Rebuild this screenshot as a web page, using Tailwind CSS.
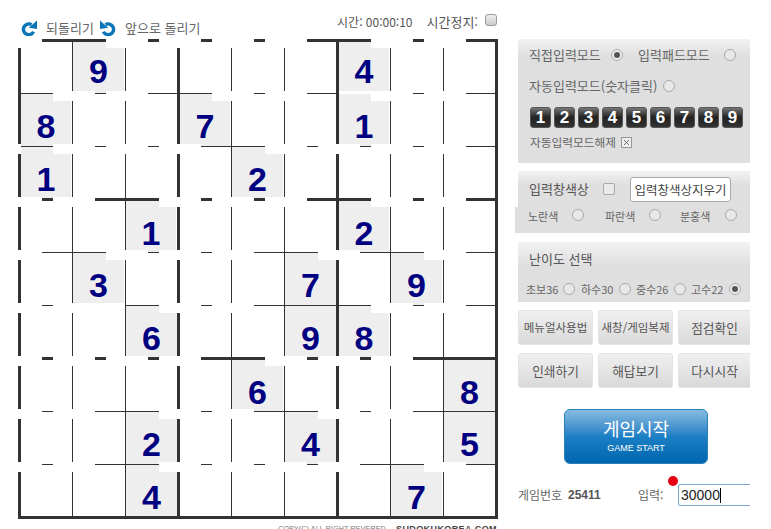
<!DOCTYPE html>
<html lang="ko">
<head>
<meta charset="utf-8">
<script src="https://cdn.jsdelivr.net/npm/@tailwindcss/browser@4"></script>
</head>
<body class="bg-white">
<div class="relative flex w-[771px] h-[529px] overflow-hidden bg-white text-[#666] font-['Noto_Sans_CJK_KR','Liberation_Sans',sans-serif]">

  <!-- left column -->
  <div class="w-[480px] ml-[18px] shrink-0 flex flex-col">
    <div class="h-[39px] shrink-0 relative flex">
      <div class="flex items-center h-[16px] mt-[20px] ml-[3px] text-[13px] leading-[16px]">
        <svg class="w-[16px] h-[16px]" viewBox="0 0 16 16"><path d="M12.6 11.8A5.4 5.4 0 1 1 10.6 4.6" fill="none" stroke="#0a76b7" stroke-width="3.4"/><polygon points="16,0.5 16,9 7.8,7.8" fill="#0a76b7"/></svg>
        <span class="ml-[9px] w-[54px]">되돌리기</span>
        <svg class="w-[16px] h-[16px] -scale-x-100" viewBox="0 0 16 16"><path d="M12.6 11.8A5.4 5.4 0 1 1 10.6 4.6" fill="none" stroke="#0a76b7" stroke-width="3.4"/><polygon points="16,0.5 16,9 7.8,7.8" fill="#0a76b7"/></svg>
        <span class="ml-[9px]">앞으로 돌리기</span>
      </div>
      <div class="ml-auto flex items-start mt-[14px] text-[12px] leading-[16px] text-[#555]">
        <span>시간: 00:00:10</span>
        <span class="ml-[14px] text-[13px]">시간정지:</span>
        <span class="ml-[7px] mr-[1px] w-[12px] h-[12px] rounded-[3px] border border-[#999] bg-linear-to-b from-[#eee] to-[#ccc]"></span>
      </div>
    </div>

    <div class="relative shrink-0 w-[480px] h-[480px] border-[3px] border-[#333] grid grid-cols-[52px_53px_54px_52px_53px_54px_52px_53px_51px] grid-rows-[52px_53px_54px_52px_53px_54px_52px_53px_51px] font-['Liberation_Sans',sans-serif]">
      <!-- row 1 -->
      <div class="border-r border-b border-[#333]"></div>
      <div class="border-r border-b border-[#333]"><div class="h-full mr-px bg-[#eee] flex justify-center pt-[12px] text-[34px] leading-[34px] font-bold text-[#000080]">9</div></div>
      <div class="border-r-[3px] border-b border-[#333]"></div>
      <div class="border-r border-b border-[#333]"></div>
      <div class="border-r border-b border-[#333]"></div>
      <div class="border-r-[3px] border-b border-[#333]"></div>
      <div class="border-r border-b border-[#333]"><div class="h-full mr-px bg-[#eee] flex justify-center pt-[12px] text-[34px] leading-[34px] font-bold text-[#000080]">4</div></div>
      <div class="border-r border-b border-[#333]"></div>
      <div class="border-b border-[#333]"></div>
      <!-- row 2 -->
      <div class="border-r border-b border-[#333]"><div class="h-full mr-px bg-[#eee] flex justify-center pt-[15px] text-[34px] leading-[34px] font-bold text-[#000080]">8</div></div>
      <div class="border-r border-b border-[#333]"></div>
      <div class="border-r-[3px] border-b border-[#333]"></div>
      <div class="border-r border-b border-[#333]"><div class="h-full mr-px bg-[#eee] flex justify-center pt-[15px] text-[34px] leading-[34px] font-bold text-[#000080]">7</div></div>
      <div class="border-r border-b border-[#333]"></div>
      <div class="border-r-[3px] border-b border-[#333]"></div>
      <div class="border-r border-b border-[#333]"><div class="h-full mr-px bg-[#eee] flex justify-center pt-[15px] text-[34px] leading-[34px] font-bold text-[#000080]">1</div></div>
      <div class="border-r border-b border-[#333]"></div>
      <div class="border-b border-[#333]"></div>
      <!-- row 3 -->
      <div class="border-r border-b-[3px] border-[#333]"><div class="h-full mr-px bg-[#eee] flex justify-center pt-[15px] text-[34px] leading-[34px] font-bold text-[#000080]">1</div></div>
      <div class="border-r border-b-[3px] border-[#333]"></div>
      <div class="border-r-[3px] border-b-[3px] border-[#333]"></div>
      <div class="border-r border-b-[3px] border-[#333]"></div>
      <div class="border-r border-b-[3px] border-[#333]"><div class="h-full mr-px bg-[#eee] flex justify-center pt-[15px] text-[34px] leading-[34px] font-bold text-[#000080]">2</div></div>
      <div class="border-r-[3px] border-b-[3px] border-[#333]"></div>
      <div class="border-r border-b-[3px] border-[#333]"></div>
      <div class="border-r border-b-[3px] border-[#333]"></div>
      <div class="border-b-[3px] border-[#333]"></div>
      <!-- row 4 -->
      <div class="border-r border-b border-[#333]"></div>
      <div class="border-r border-b border-[#333]"></div>
      <div class="border-r-[3px] border-b border-[#333]"><div class="h-full mr-px bg-[#eee] flex justify-center pt-[15px] text-[34px] leading-[34px] font-bold text-[#000080]">1</div></div>
      <div class="border-r border-b border-[#333]"></div>
      <div class="border-r border-b border-[#333]"></div>
      <div class="border-r-[3px] border-b border-[#333]"></div>
      <div class="border-r border-b border-[#333]"><div class="h-full mr-px bg-[#eee] flex justify-center pt-[15px] text-[34px] leading-[34px] font-bold text-[#000080]">2</div></div>
      <div class="border-r border-b border-[#333]"></div>
      <div class="border-b border-[#333]"></div>
      <!-- row 5 -->
      <div class="border-r border-b border-[#333]"></div>
      <div class="border-r border-b border-[#333]"><div class="h-full mr-px bg-[#eee] flex justify-center pt-[15px] text-[34px] leading-[34px] font-bold text-[#000080]">3</div></div>
      <div class="border-r-[3px] border-b border-[#333]"></div>
      <div class="border-r border-b border-[#333]"></div>
      <div class="border-r border-b border-[#333]"></div>
      <div class="border-r-[3px] border-b border-[#333]"><div class="h-full bg-[#eee] flex justify-center pt-[15px] text-[34px] leading-[34px] font-bold text-[#000080]">7</div></div>
      <div class="border-r border-b border-[#333]"></div>
      <div class="border-r border-b border-[#333]"><div class="h-full mr-px bg-[#eee] flex justify-center pt-[15px] text-[34px] leading-[34px] font-bold text-[#000080]">9</div></div>
      <div class="border-b border-[#333]"></div>
      <!-- row 6 -->
      <div class="border-r border-b-[3px] border-[#333]"></div>
      <div class="border-r border-b-[3px] border-[#333]"></div>
      <div class="border-r-[3px] border-b-[3px] border-[#333]"><div class="h-full bg-[#eee] flex justify-center pt-[15px] text-[34px] leading-[34px] font-bold text-[#000080]">6</div></div>
      <div class="border-r border-b-[3px] border-[#333]"></div>
      <div class="border-r border-b-[3px] border-[#333]"></div>
      <div class="border-r-[3px] border-b-[3px] border-[#333]"><div class="h-full bg-[#eee] flex justify-center pt-[15px] text-[34px] leading-[34px] font-bold text-[#000080]">9</div></div>
      <div class="border-r border-b-[3px] border-[#333]"><div class="h-full mr-px bg-[#eee] flex justify-center pt-[15px] text-[34px] leading-[34px] font-bold text-[#000080]">8</div></div>
      <div class="border-r border-b-[3px] border-[#333]"></div>
      <div class="border-b-[3px] border-[#333]"></div>
      <!-- row 7 -->
      <div class="border-r border-b border-[#333]"></div>
      <div class="border-r border-b border-[#333]"></div>
      <div class="border-r-[3px] border-b border-[#333]"></div>
      <div class="border-r border-b border-[#333]"></div>
      <div class="border-r border-b border-[#333]"><div class="h-full mr-px bg-[#eee] flex justify-center pt-[15px] text-[34px] leading-[34px] font-bold text-[#000080]">6</div></div>
      <div class="border-r-[3px] border-b border-[#333]"></div>
      <div class="border-r border-b border-[#333]"></div>
      <div class="border-r border-b border-[#333]"></div>
      <div class="border-b border-[#333]"><div class="h-full bg-[#eee] flex justify-center pt-[15px] text-[34px] leading-[34px] font-bold text-[#000080]">8</div></div>
      <!-- row 8 -->
      <div class="border-r border-b border-[#333]"></div>
      <div class="border-r border-b border-[#333]"></div>
      <div class="border-r-[3px] border-b border-[#333]"><div class="h-full bg-[#eee] flex justify-center pt-[15px] text-[34px] leading-[34px] font-bold text-[#000080]">2</div></div>
      <div class="border-r border-b border-[#333]"></div>
      <div class="border-r border-b border-[#333]"></div>
      <div class="border-r-[3px] border-b border-[#333]"><div class="h-full bg-[#eee] flex justify-center pt-[15px] text-[34px] leading-[34px] font-bold text-[#000080]">4</div></div>
      <div class="border-r border-b border-[#333]"></div>
      <div class="border-r border-b border-[#333]"></div>
      <div class="border-b border-[#333]"><div class="h-full bg-[#eee] flex justify-center pt-[15px] text-[34px] leading-[34px] font-bold text-[#000080]">5</div></div>
      <!-- row 9 -->
      <div class="border-r border-[#333]"></div>
      <div class="border-r border-[#333]"></div>
      <div class="border-r-[3px] border-[#333]"><div class="h-full bg-[#eee] flex justify-center pt-[15px] text-[34px] leading-[34px] font-bold text-[#000080]">4</div></div>
      <div class="border-r border-[#333]"></div>
      <div class="border-r border-[#333]"></div>
      <div class="border-r-[3px] border-[#333]"></div>
      <div class="border-r border-[#333]"></div>
      <div class="border-r border-[#333]"><div class="h-full mr-px bg-[#eee] flex justify-center pt-[15px] text-[34px] leading-[34px] font-bold text-[#000080]">7</div></div>
      <div></div>

      <!-- white patches lying over the board lines -->
      <svg class="absolute -left-[3px] -top-[3px] w-[480px] h-[480px] pointer-events-none" viewBox="18 39 480 480" fill="#fff">
        <rect x="15" y="38" width="27" height="10"/><rect x="106" y="38" width="42" height="10"/><rect x="159" y="38" width="42" height="10"/><rect x="212" y="38" width="42" height="10"/><rect x="265" y="38" width="42" height="10"/><rect x="371" y="38" width="42" height="10"/><rect x="424" y="38" width="42" height="10"/>
        <rect x="53" y="91" width="42" height="10"/><rect x="106" y="91" width="42" height="10"/><rect x="212" y="91" width="42" height="10"/><rect x="265" y="91" width="42" height="10"/><rect x="339" y="91" width="32" height="3"/><rect x="371" y="91" width="42" height="10"/><rect x="424" y="91" width="42" height="10"/>
        <rect x="15" y="144" width="6" height="10"/><rect x="53" y="144" width="42" height="10"/><rect x="106" y="144" width="42" height="10"/><rect x="159" y="144" width="42" height="10"/><rect x="265" y="144" width="42" height="10"/><rect x="318" y="144" width="42" height="10"/><rect x="371" y="144" width="42" height="10"/><rect x="424" y="144" width="42" height="10"/>
        <rect x="15" y="197" width="27" height="10"/><rect x="53" y="197" width="42" height="10"/><rect x="159" y="197" width="42" height="10"/><rect x="212" y="197" width="42" height="10"/><rect x="265" y="197" width="42" height="10"/><rect x="371" y="197" width="42" height="10"/><rect x="424" y="197" width="42" height="10"/>
        <rect x="15" y="250" width="27" height="10"/><rect x="106" y="250" width="42" height="10"/><rect x="159" y="250" width="42" height="10"/><rect x="212" y="250" width="42" height="10"/><rect x="318" y="250" width="42" height="10"/><rect x="424" y="250" width="42" height="10"/>
        <rect x="15" y="303" width="27" height="10"/><rect x="53" y="303" width="72" height="10"/><rect x="159" y="303" width="42" height="10"/><rect x="212" y="303" width="42" height="10"/><rect x="371" y="303" width="42" height="10"/><rect x="424" y="303" width="42" height="10"/>
        <rect x="15" y="356" width="27" height="10"/><rect x="53" y="356" width="42" height="10"/><rect x="106" y="356" width="42" height="10"/><rect x="159" y="356" width="42" height="10"/><rect x="265" y="356" width="42" height="10"/><rect x="318" y="356" width="42" height="10"/><rect x="371" y="356" width="42" height="10"/>
        <rect x="15" y="409" width="27" height="10"/><rect x="53" y="409" width="42" height="10"/><rect x="159" y="409" width="42" height="10"/><rect x="212" y="409" width="42" height="10"/><rect x="318" y="409" width="42" height="10"/><rect x="371" y="409" width="42" height="10"/>
        <rect x="15" y="462" width="27" height="10"/><rect x="53" y="462" width="42" height="10"/><rect x="159" y="462" width="42" height="10"/><rect x="212" y="462" width="42" height="10"/><rect x="265" y="462" width="42" height="10"/><rect x="318" y="462" width="42" height="10"/><rect x="424" y="462" width="42" height="10"/>
      </svg>
    </div>

    <div class="flex justify-end shrink-0 mt-[4px] pr-px gap-[8px] h-[12px] items-start font-['Liberation_Sans',sans-serif] leading-[12px] whitespace-nowrap">
      <span class="text-[7px] tracking-[0.2px] text-[#777]">COPY(C) ALL RIGHT REVERED.</span>
      <span class="text-[9px] font-bold tracking-[0.4px] text-[#444]">SUDOKUKOREA.COM</span>
    </div>
  </div>

  <!-- right column -->
  <div class="w-[232px] ml-[20px] shrink-0 pt-[39px] flex flex-col">
    <!-- mode panel -->
    <div class="h-[124px] shrink-0 rounded-tl-[2px] bg-linear-to-b from-[#f2f2f2] from-0% to-[#dfdfdf] to-[14%] bg-[#dfdfdf] pl-[11px] pt-[9px]">
      <div class="flex items-center h-[14px] text-[13px] leading-[14px]">
        <span class="w-[82px] shrink-0">직접입력모드</span>
        <span class="w-[12px] h-[12px] shrink-0 rounded-full border border-[#aaa] bg-[#eee] flex items-center justify-center"><span class="w-[6px] h-[6px] rounded-full bg-[#555]"></span></span>
        <span class="ml-[15px] w-[86px] shrink-0">입력패드모드</span>
        <span class="w-[12px] h-[12px] shrink-0 rounded-full border border-[#aaa] bg-[#e8e8e8]"></span>
      </div>
      <div class="flex items-center h-[14px] mt-[17px] text-[13px] leading-[14px]">
        <span class="w-[134px] shrink-0">자동입력모드(숫자클릭)</span>
        <span class="w-[12px] h-[12px] shrink-0 rounded-full border border-[#aaa] bg-[#e8e8e8]"></span>
      </div>
      <div class="flex gap-[3px] mt-[14px] ml-[1px] font-['Liberation_Sans',sans-serif] text-[17px] font-bold text-white">
        <span class="w-[21px] h-[21px] rounded-[3px] border border-[#555] bg-linear-to-b from-[#777] via-[#222] to-[#333] flex items-center justify-center">1</span>
        <span class="w-[21px] h-[21px] rounded-[3px] border border-[#555] bg-linear-to-b from-[#777] via-[#222] to-[#333] flex items-center justify-center">2</span>
        <span class="w-[21px] h-[21px] rounded-[3px] border border-[#555] bg-linear-to-b from-[#777] via-[#222] to-[#333] flex items-center justify-center">3</span>
        <span class="w-[21px] h-[21px] rounded-[3px] border border-[#555] bg-linear-to-b from-[#777] via-[#222] to-[#333] flex items-center justify-center">4</span>
        <span class="w-[21px] h-[21px] rounded-[3px] border border-[#555] bg-linear-to-b from-[#777] via-[#222] to-[#333] flex items-center justify-center">5</span>
        <span class="w-[21px] h-[21px] rounded-[3px] border border-[#555] bg-linear-to-b from-[#777] via-[#222] to-[#333] flex items-center justify-center">6</span>
        <span class="w-[21px] h-[21px] rounded-[3px] border border-[#555] bg-linear-to-b from-[#777] via-[#222] to-[#333] flex items-center justify-center">7</span>
        <span class="w-[21px] h-[21px] rounded-[3px] border border-[#555] bg-linear-to-b from-[#777] via-[#222] to-[#333] flex items-center justify-center">8</span>
        <span class="w-[21px] h-[21px] rounded-[3px] border border-[#555] bg-linear-to-b from-[#777] via-[#222] to-[#333] flex items-center justify-center">9</span>
      </div>
      <div class="flex items-center h-[14px] mt-[7px] ml-[1px] text-[11.7px] leading-[14px]">
        <span class="w-[91px] shrink-0 whitespace-nowrap">자동입력모드해제</span>
        <span class="w-[11px] h-[11px] shrink-0 border border-[#999] bg-[#eee] flex items-center justify-center text-[#555]"><svg class="w-[7px] h-[7px]" viewBox="0 0 7 7"><path d="M1 1L6 6M6 1L1 6" stroke="#555" stroke-width="0.8"/></svg></span>
      </div>
    </div>

    <!-- colour panel -->
    <div class="mt-[8px] h-[62px] shrink-0 relative">
      <div class="h-[36px] rounded-tl-[2px] bg-linear-to-b from-[#f2f2f2] to-[#dfdfdf] to-[40%] flex items-start pl-[11px]">
        <span class="w-[74px] shrink-0 mt-[11px] text-[13px] leading-[14px] text-[#555]">입력창색상</span>
        <span class="mt-[12px] w-[12px] h-[12px] shrink-0 rounded-[2px] border border-[#aaa] bg-[#eaeaea]"></span>
        <span class="ml-[15px] mt-[6px] w-[101px] h-[25px] shrink-0 rounded-[3px] border border-[#aaa] bg-white text-[12.5px] leading-[23px] text-center text-[#444] whitespace-nowrap">입력창색상지우기</span>
      </div>
      <div class="h-[26px] -ml-[3px] bg-[#dfdfdf] flex items-start pl-[13px] text-[11px] leading-[14px] text-[#666]">
        <span class="w-[44px] shrink-0 mt-[2px]">노란색</span>
        <span class="mt-[2px] w-[12px] h-[12px] shrink-0 rounded-full border border-[#aaa] bg-[#e8e8e8]"></span>
        <span class="ml-[21px] w-[44px] shrink-0 mt-[2px]">파란색</span>
        <span class="mt-[2px] w-[12px] h-[12px] shrink-0 rounded-full border border-[#aaa] bg-[#e8e8e8]"></span>
        <span class="ml-[19px] w-[45px] shrink-0 mt-[2px]">분홍색</span>
        <span class="mt-[2px] w-[12px] h-[12px] shrink-0 rounded-full border border-[#aaa] bg-[#e8e8e8]"></span>
      </div>
    </div>

    <!-- level panel -->
    <div class="mt-[9px] h-[60px] shrink-0 rounded-tl-[2px] bg-linear-to-b from-[#f2f2f2] to-[#dfdfdf] to-[40%] bg-[#dfdfdf]">
      <div class="pl-[11px] pt-[9px] text-[13px] leading-[16px] text-[#555]">난이도 선택</div>
      <div class="flex items-center mt-[16px] ml-[8px] h-[12px] text-[11px] leading-[12px]">
        <span class="w-[37px] shrink-0 whitespace-nowrap">초보36</span>
        <span class="w-[12px] h-[12px] shrink-0 rounded-full border border-[#aaa] bg-[#e8e8e8]"></span>
        <span class="ml-[6px] w-[38px] shrink-0 whitespace-nowrap">하수30</span>
        <span class="w-[12px] h-[12px] shrink-0 rounded-full border border-[#aaa] bg-[#e8e8e8]"></span>
        <span class="ml-[5px] w-[38px] shrink-0 whitespace-nowrap">중수26</span>
        <span class="w-[12px] h-[12px] shrink-0 rounded-full border border-[#aaa] bg-[#e8e8e8]"></span>
        <span class="ml-[5px] w-[38px] shrink-0 whitespace-nowrap">고수22</span>
        <span class="w-[12px] h-[12px] shrink-0 rounded-full border border-[#aaa] bg-[#eee] flex items-center justify-center"><span class="w-[6px] h-[6px] rounded-full bg-[#555]"></span></span>
      </div>
    </div>

    <!-- buttons -->
    <div class="mt-[8px] shrink-0 grid grid-cols-[75px_75px_72px] grid-rows-[35px_35px] gap-x-[5px] gap-y-[8px] text-[#555]">
      <div class="rounded-[3px] border border-[#e4e4e4] bg-linear-to-b from-[#f0f0f0] to-[#d9d9d9] flex items-center justify-center text-[11.5px] whitespace-nowrap">메뉴얼사용법</div>
      <div class="rounded-[3px] border border-[#e4e4e4] bg-linear-to-b from-[#f0f0f0] to-[#d9d9d9] flex items-center justify-center text-[11.5px] whitespace-nowrap">새창/게임복제</div>
      <div class="rounded-l-[3px] border border-r-0 border-[#e4e4e4] bg-linear-to-b from-[#f0f0f0] to-[#d9d9d9] flex items-center justify-center text-[12.7px] whitespace-nowrap">점검확인</div>
      <div class="rounded-[3px] border border-[#e4e4e4] bg-linear-to-b from-[#f0f0f0] to-[#d9d9d9] flex items-center justify-center text-[12.7px] whitespace-nowrap">인쇄하기</div>
      <div class="rounded-[3px] border border-[#e4e4e4] bg-linear-to-b from-[#f0f0f0] to-[#d9d9d9] flex items-center justify-center text-[12.7px] whitespace-nowrap">해답보기</div>
      <div class="rounded-l-[3px] border border-r-0 border-[#e4e4e4] bg-linear-to-b from-[#f0f0f0] to-[#d9d9d9] flex items-center justify-center text-[12.7px] whitespace-nowrap">다시시작</div>
    </div>

    <!-- start button -->
    <div class="mt-[21px] ml-[46px] w-[144px] h-[55px] shrink-0 rounded-[6px] border border-[#2a7fbd] bg-linear-to-b from-[#86bbe0] via-[#1b7fc4] via-50% to-[#0066ae] flex flex-col items-center text-white">
      <span class="mt-[6px] text-[18px] leading-[24px]">게임시작</span>
      <span class="mt-[2px] text-[9px] leading-[12px] font-['Liberation_Sans',sans-serif]">GAME START</span>
    </div>

    <!-- bottom row -->
    <div class="mt-[20px] h-[22px] shrink-0 flex items-center relative text-[12px] text-[#666] overflow-hidden">
      <span class="w-[50px] shrink-0 whitespace-nowrap">게임번호</span>
      <span class="w-[70px] shrink-0 font-bold font-['Liberation_Sans',sans-serif] text-[#555]">25411</span>
      <span class="w-[40px] shrink-0 whitespace-nowrap">입력:</span>
      <span class="h-[22px] w-[100px] shrink-0 border border-[#7ba6d6] rounded-l-[2px] pl-[2px] text-[14px] leading-[20px] text-[#222] font-['Liberation_Sans',sans-serif] flex items-center"><span>30000</span><span class="w-px h-[15px] bg-black"></span></span>
    </div>
  </div>

  <!-- red marker above the input -->
  <span class="absolute left-[668px] top-[476px] w-[10px] h-[10px] rounded-full bg-[#e60012]"></span>
</div>
</body>
</html>
